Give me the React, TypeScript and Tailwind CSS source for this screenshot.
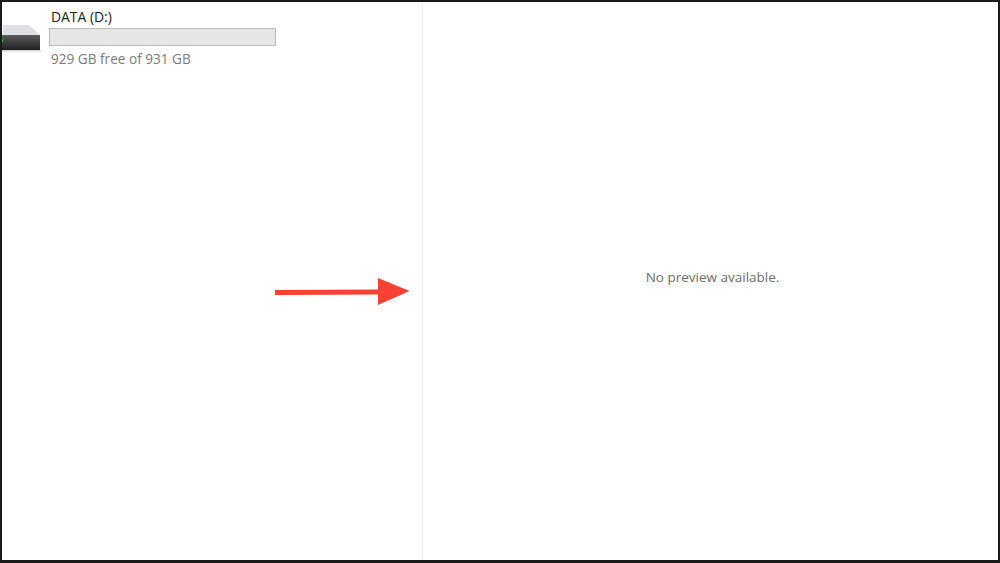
function DriveIcon() {
  return (
    <svg width="40" height="28" viewBox="0 0 40 28" className="shrink-0">
      <defs>
        <linearGradient id="driveBody" x1="0" y1="0" x2="0" y2="1">
          <stop offset="0" stopColor="#5c5c5c" />
          <stop offset="1" stopColor="#1f1f1f" />
        </linearGradient>
      </defs>
      <polygon points="1,0 27,0 38,10 1,10" fill="#dfe0e4" />
      <rect x="0" y="10" width="38" height="15" fill="url(#driveBody)" />
      <rect x="0" y="25" width="39" height="1.5" fill="#d5d5d5" />
      <rect x="0" y="14" width="1" height="3" fill="#22c522" />
    </svg>
  );
}

export default function App() {
  return (
    <div className="relative flex h-[563px] w-[1000px] border-2 border-b-[3px] border-[#1a1a1a] bg-white font-['Open_Sans','Noto_Sans',sans-serif]">
      {/* left pane - drive list */}
      <div className="w-[421px] shrink-0 border-r border-[#efefef]">
        <div className="flex items-start pt-[4px]">
          <div className="mt-[19px] w-[47px] shrink-0">
            <DriveIcon />
          </div>
          <div className="flex flex-col">
            <span className="pl-[2px] text-[13.9px] leading-[22px] text-[#222222]">DATA (D:)</span>
            <div className="h-[18px] w-[227px] border border-[#bcbcbc] bg-[#e6e6e6]"></div>
            <span className="mt-[3px] pl-[2px] text-[13.6px] leading-[20px] text-[#7a7a7a]">929 GB free of 931 GB</span>
          </div>
        </div>
      </div>

      {/* right pane - preview */}
      <div className="flex flex-1 items-center justify-center pb-[8px] pl-[4px]">
        <span className="text-[13.5px] text-[#6d6d6d]">No preview available.</span>
      </div>

      {/* red annotation arrow */}
      <svg width="140" height="32" viewBox="0 0 140 32" className="absolute left-[273px] top-[274px]">
        <polygon points="0,14 103,13.5 103,2 134.5,15 103,29 103,18.5 0,19" fill="#f94233" />
      </svg>
    </div>
  );
}
